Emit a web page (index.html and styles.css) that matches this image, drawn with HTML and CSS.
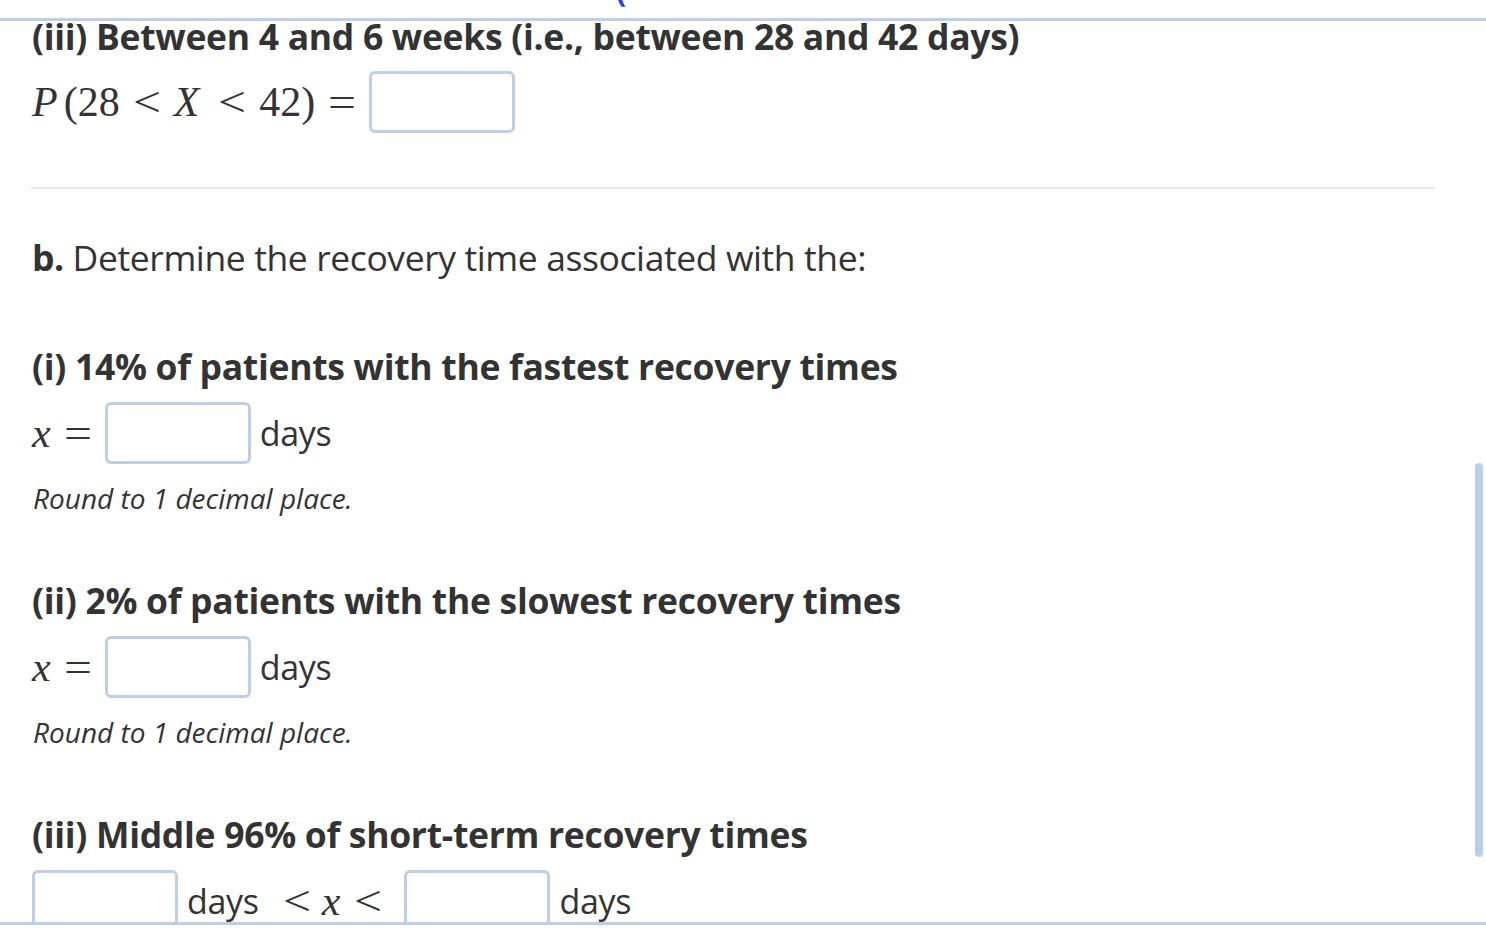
FILE: index.html
```html
<!DOCTYPE html>
<html lang="en">
<head>
<meta charset="utf-8">
<title>Recovery times</title>
<link rel="stylesheet" href="styles.css">
</head>
<body>
<div class="topstrip"><span class="peek">(</span></div>
<div class="frame">
  <div class="content">
    <h3 class="part first">(iii) Between 4 and 6 weeks (i.e., between 28 and 42 days)</h3>
    <div class="row math-row">
      <span class="math"><i>P</i><span class="sp1"></span>(28<span class="rel">&lt;</span><i>X</i><span class="rel after-x">&lt;</span>42)<span class="rel">=</span></span>
      <span class="answer"></span>
    </div>
    <hr class="sep">
    <p class="lead"><b>b.</b> Determine the recovery time associated with the:</p>

    <h3 class="part">(i) 14% of patients with the fastest recovery times</h3>
    <div class="row">
      <span class="math"><i>x</i><span class="rel">=</span></span>
      <span class="answer"></span>
      <span class="unit">days</span>
    </div>
    <p class="hint">Round to 1 decimal place.</p>

    <h3 class="part">(ii) 2% of patients with the slowest recovery times</h3>
    <div class="row">
      <span class="math"><i>x</i><span class="rel">=</span></span>
      <span class="answer"></span>
      <span class="unit">days</span>
    </div>
    <p class="hint">Round to 1 decimal place.</p>

    <h3 class="part">(iii) Middle 96% of short-term recovery times</h3>
    <div class="row">
      <span class="answer"></span>
      <span class="unit">days</span>
      <span class="math range"><span class="rel r1">&lt;</span><i>x</i><span class="rel r2">&lt;</span></span>
      <span class="answer"></span>
      <span class="unit">days</span>
    </div>
  </div>
  <div class="scrollbar"></div>
</div>
<div class="bottomstrip"></div>
</body>
</html>
```

FILE: styles.css
```css
html, body {
  margin: 0;
  padding: 0;
  background: #fff;
}
body {
  font-family: "Open Sans", "Noto Sans", sans-serif;
  color: #333;
  width: 1486px;
  height: 935px;
  overflow: hidden;
}
.topstrip {
  height: 18px;
  position: relative;
  overflow: hidden;
}
.peek {
  position: absolute;
  left: 616px;
  top: -24px;
  font-size: 30px;
  line-height: 30px;
  color: #2a3ee8;
  font-weight: bold;
}
.frame {
  position: relative;
  border-top: 3px solid #bccfe8;
  border-bottom: 3px solid #bccfe8;
  height: 901px;
  overflow: hidden;
}
.content {
  padding: 0 0 0 32px;
  margin-top: -5px;
}
.part {
  margin: 0;
  font-size: 35.5px;
  line-height: 40px;
  font-weight: 700;
  letter-spacing: -0.3px;
}
.row {
  display: flex;
  align-items: center;
  height: 62px;
  margin-top: 16px;
}
.math-row { margin-top: 15px; }
.math {
  font-family: "Liberation Serif", "Times New Roman", serif;
  font-size: 42px;
  color: #333;
  display: inline-flex;
  align-items: center;
  white-space: nowrap;
}
.math i { font-style: italic; }
.rel {
  display: inline-block;
  width: 28px;
  text-align: center;
  transform: scaleX(1.18);
  margin: 0 13px;
}
.rel.after-x { margin-left: 19px; }
.sp1 { width: 6px; display: inline-block; }
.answer {
  box-sizing: border-box;
  width: 146px;
  height: 62px;
  border: 3px solid #bccfe8;
  border-radius: 6px;
  background: #fff;
  flex: none;
}
.unit {
  font-size: 34px;
  margin-left: 9px;
  letter-spacing: -0.3px;
}
.range .r1 { margin: 0 11px 0 24px; }
.range .r2 { margin: 0 22px 0 14px; }
.sep {
  border: 0;
  height: 2px;
  background: #ebebeb;
  margin: 54px 51px 0 -1px;
}
.lead {
  margin: 48px 0 0;
  font-size: 35.5px;
  line-height: 40px;
  letter-spacing: -0.4px;
}
.lead + .part { margin-top: 69px; }
.hint {
  margin: 19px 0 0 1px;
  font-size: 28px;
  line-height: 30px;
  font-style: italic;
}
.hint + .part { margin-top: 67px; }
.scrollbar {
  position: absolute;
  right: 3px;
  top: 442px;
  width: 8px;
  height: 394px;
  border-radius: 4px;
  background: #bccfe8;
}
.bottomstrip { height: 10px; }
```
